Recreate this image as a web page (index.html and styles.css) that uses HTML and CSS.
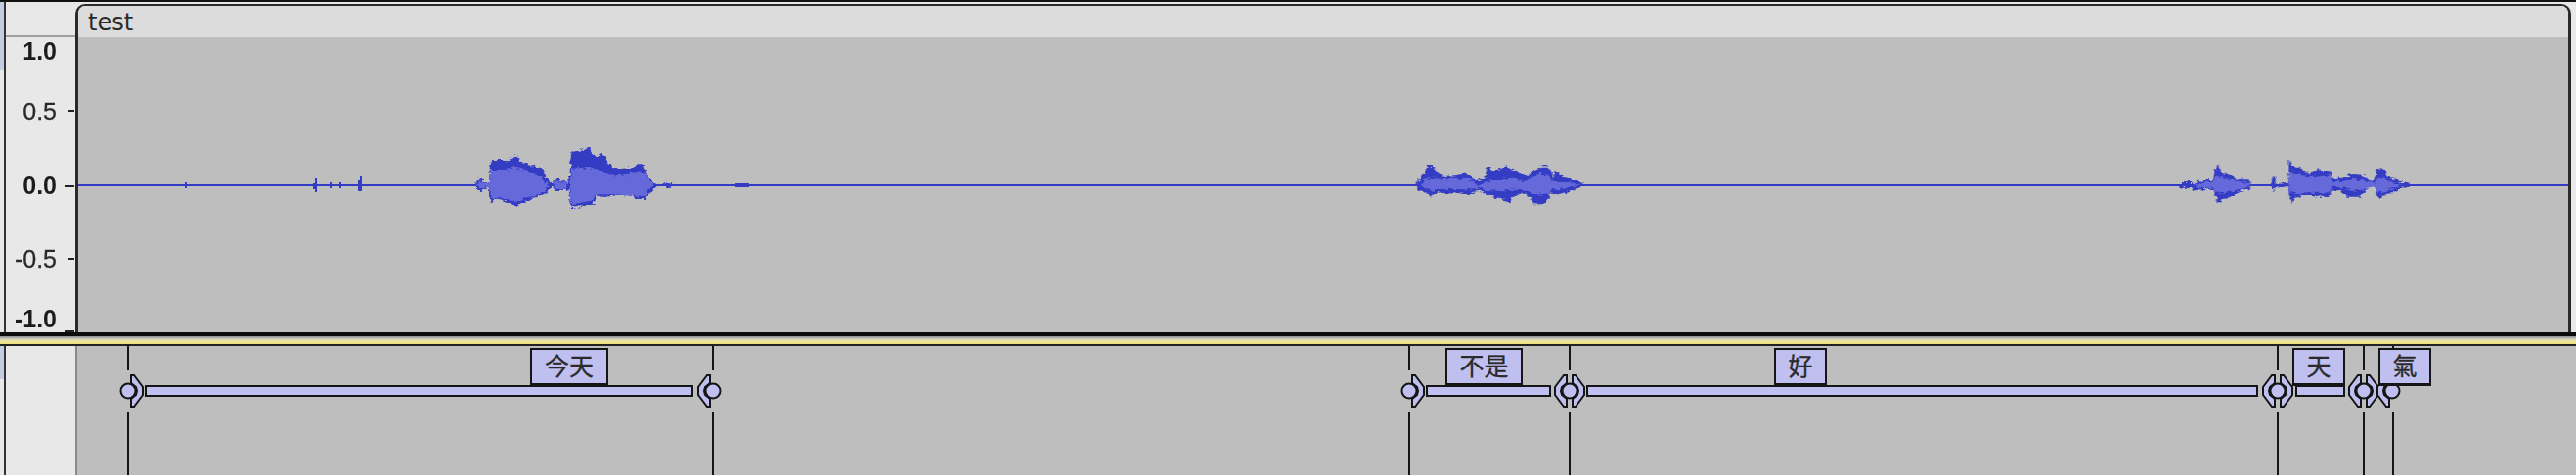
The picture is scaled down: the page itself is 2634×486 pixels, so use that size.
FILE: index.html
```html
<!DOCTYPE html>
<html>
<head>
    <title>test</title>
    <link rel="stylesheet" href="styles.css">
</head>
<body>
    <div class="top-line"></div>

    <div class="audio-row">
        <div class="strip"><div class="strip-tab tall"></div></div>
        <div class="ruler">
            <div class="ruler-head"></div>
            <div class="scale">
                <div class="mark bold">1.0</div>
                <div class="mark tick">0.5</div>
                <div class="mark bold tick long">0.0</div>
                <div class="mark tick">-0.5</div>
                <div class="mark bold">-1.0</div>
            </div>
        </div>
        <div class="clip">
            <div class="clip-title">test</div>
            <div class="clip-body">
                <svg class="wave" viewBox="80 38 2546 302" preserveAspectRatio="none">
                    <defs>
                        <!-- breaks up the smooth outlines so they read as sample columns -->
                        <filter id="rough" filterUnits="userSpaceOnUse" x="80" y="38" width="2546" height="302" color-interpolation-filters="sRGB">
                            <feTurbulence type="fractalNoise" baseFrequency="0.22 0.45" numOctaves="1" seed="4" result="noise"/>
                            <feDisplacementMap in="SourceGraphic" in2="noise" scale="7" xChannelSelector="R" yChannelSelector="G"/>
                        </filter>
                    </defs>

                    <rect class="peak" x="80" y="188" width="2546" height="2"/>

                    <!-- small blips before the first word -->
                    <rect class="peak" x="189" y="186" width="2" height="6"/>
                    <path class="peak" d="M320 187h2v-5h2v14h-2v-3h-2z"/>
                    <rect class="peak" x="337" y="186" width="2" height="6"/>
                    <rect class="peak" x="347" y="186" width="2" height="6"/>
                    <path class="peak" d="M366 184h2v-4h2v15h-4z"/>
                    <rect class="peak" x="752" y="187" width="14" height="4"/>

                    <g class="words">
                        <!-- 今天 -->
                        <g transform="translate(450 130) scale(0.3333)">
                            <path class="peak" d="M108 177 112 165 122 155 135 165 140 170 150 170 152 128 157 102 190 102 195 108 215 100 225 90 240 93 247 108 270 118 290 122 315 128 322 150 332 165 342 172 347 177 350 162 360 155 365 162 388 165 392 172 398 140 402 80 420 75 440 68 458 60 466 78 480 95 495 85 505 92 515 115 535 128 560 128 595 126 605 115 622 115 632 135 640 155 655 168 668 177 685 177 690 170 710 168 716 177 700 186 685 177 668 177 655 190 638 205 632 222 600 222 590 210 535 212 500 215 480 212 470 240 440 240 405 250 398 225 395 190 392 192 350 192 345 180 335 190 322 208 290 218 250 235 232 245 215 235 180 222 155 232 150 215 150 185 138 185 125 197 112 188z"/>
                            <path class="rms" d="M112 177 125 163 135 172 150 172 155 132 200 132 230 122 260 135 300 145 320 160 332 177 322 195 300 208 260 220 230 232 195 218 160 222 152 190 138 182 125 190zM350 166 388 168 388 188 350 188zM398 177 402 128 440 125 480 130 520 145 560 148 600 135 630 140 645 165 655 177 640 190 632 212 600 212 535 208 480 208 460 228 405 238 398 210z"/>
                        </g>

                        <!-- 不是 -->
                        <g transform="translate(1420 140) scale(0.3333)">
                            <path class="peak" d="M85 146 90 125 95 135 100 118 108 115 112 100 120 90 135 90 150 110 170 120 200 118 240 112 260 125 272 135 300 122 300 95 310 95 312 105 340 100 365 90 375 100 410 112 430 120 440 105 470 92 490 92 500 110 505 125 508 108 520 110 535 122 560 130 585 138 600 146 580 155 555 165 520 175 505 178 495 170 490 195 470 208 445 208 425 180 410 170 380 185 368 208 350 192 325 185 300 178 275 160 262 170 245 178 200 168 180 175 160 168 135 178 128 185 120 175 100 160 90 165z"/>
                            <path class="rms" d="M100 146 108 128 130 125 160 130 210 128 250 128 275 150 300 135 340 130 380 125 415 135 435 125 465 112 490 120 500 135 535 135 570 142 590 146 570 150 530 160 500 160 490 172 450 180 425 165 400 158 340 165 300 162 275 155 240 160 160 158 130 165 100 150z"/>
                        </g>

                        <!-- 天氣 -->
                        <g transform="translate(2200 140) scale(0.3333)">
                            <path class="peak" d="M85 146 85 138 125 138 130 146 140 135 170 130 190 128 195 98 205 85 210 108 240 112 260 130 270 125 275 130 300 130 305 146 305 150 300 160 270 165 250 180 215 195 205 205 195 180 190 160 130 160 125 155 85 155z"/>
                            <path class="peak" d="M365 146 370 125 378 120 380 140 420 138 422 72 430 88 460 100 480 110 505 105 510 92 520 105 545 105 552 125 590 125 610 115 640 115 660 125 680 135 692 100 705 97 718 105 720 122 745 125 765 138 790 140 792 152 765 155 745 170 720 175 715 185 690 185 685 150 665 150 650 170 640 185 600 185 580 165 552 160 545 185 510 185 495 180 470 180 440 190 430 205 422 180 420 150 380 155 375 165z"/>
                            <path class="rms" d="M130 146 190 132 200 120 240 128 260 135 300 140 303 146 300 152 250 165 215 172 195 168 190 155 150 155 130 150zM422 110 460 118 500 122 548 118 553 135 590 135 620 128 665 135 685 140 695 125 720 130 750 145 770 146 745 155 720 165 695 170 680 150 650 160 620 165 590 155 552 150 545 170 500 170 440 175 425 165 420 146z"/>
                        </g>
                    </g>
                </svg>
            </div>
        </div>
        <div class="edge"></div>
    </div>

    <div class="divider"></div>

    <div class="label-row">
        <div class="strip"><div class="strip-tab"></div></div>
        <div class="ruler"></div>
        <div class="lane">
            <svg class="handles" viewBox="79 354 2555 132">
                <defs>
                    <circle id="knob" r="7.5"/>
                    <path id="wing-right" d="M3 -16 6 -16 15 -4 15 4 6 16 3 16 3 8 8 4 9 0 8 -4 3 -8z"/>
                    <path id="wing-left" d="M-3 -16 -6 -16 -15 -4 -15 4 -6 16 -3 16 -3 8 -8 4 -9 0 -8 -4 -3 -8z"/>
                    <g id="handle-start"><use href="#wing-right"/><use href="#knob"/></g>
                    <g id="handle-end"><use href="#wing-left"/><use href="#knob"/></g>
                    <g id="handle-both"><use href="#wing-left"/><use href="#wing-right"/><use href="#knob"/></g>
                </defs>
                <path class="stems" d="M131 354V379M131 422V486M729 354V379M729 422V486M1441 354V379M1441 422V486M1605 354V379M1605 422V486M2329 354V379M2329 422V486M2417 354V379M2417 422V486M2447 354V379M2447 422V486"/>
                <use class="handle" href="#handle-start" x="131" y="400"/>
                <use class="handle" href="#handle-end" x="729" y="400"/>
                <use class="handle" href="#handle-start" x="1441" y="400"/>
                <use class="handle" href="#handle-both" x="1605" y="400"/>
                <use class="handle" href="#handle-both" x="2329" y="400"/>
                <use class="handle" href="#handle-both" x="2417" y="400"/>
                <use class="handle" href="#handle-end" x="2446" y="400"/>
            </svg>

            <div class="span" style="left: 69px; width: 561px"></div>
            <div class="span" style="left: 1379px; width: 128px"></div>
            <div class="span" style="left: 1543px; width: 687px"></div>
            <div class="span" style="left: 2268px; width: 51px"></div>

            <div class="label" style="left: 463px; width: 80px">今天</div>
            <div class="label" style="left: 1399px; width: 79px">不是</div>
            <div class="label" style="left: 1735px; width: 54px">好</div>
            <div class="label" style="left: 2265px; width: 54px">天</div>
            <div class="label" style="left: 2353px; width: 54px">氣</div>
        </div>
    </div>
</body>
</html>
```

FILE: styles.css
```css
html, body {
    margin: 0;
    padding: 0;
}

body {
    width: 2634px;
    height: 486px;
    overflow: hidden;
    background: #e8e8e8;
    font-family: "Liberation Sans", Arial, sans-serif;
    color: #222;
}

.top-line {
    height: 2px;
    background: #111;
}

.audio-row {
    display: flex;
    height: 338px;
}

.strip {
    width: 4px;
    border-right: 2px solid #333;
    flex: none;
}

.strip-tab {
    height: 34px;
    background: #c3cde0;
}

.strip-tab.tall {
    height: 70px;
}

.ruler {
    width: 71px;
    flex: none;
    background: #e8e8e8;
}

.ruler-head {
    height: 34px;
    border-bottom: 2px solid #a0a0a0;
}

.scale {
    display: grid;
    grid-template-rows: 28px 96px 55px 96px 27px;
    height: 302px;
    position: relative;
}

/* the tick at the very bottom of the scale */
.scale::after {
    content: "";
    position: absolute;
    right: 1px;
    bottom: 0;
    width: 10px;
    height: 2px;
    background: #222;
}

.mark {
    display: flex;
    align-items: center;
    justify-content: flex-end;
    padding-right: 19px;
    font-size: 25px;
    color: #2a2a2a;
    -webkit-text-stroke: 0.3px #2a2a2a;
    position: relative;
}

.mark.bold {
    font-weight: bold;
    color: #1c1c1c;
    -webkit-text-stroke: 0;
}

.mark.tick::after {
    content: "";
    position: absolute;
    right: 1px;
    top: 50%;
    width: 6px;
    height: 2px;
    margin-top: -1px;
    background: #222;
}

.mark.tick.long::after {
    width: 10px;
}

.clip {
    width: 2552px;
    flex: none;
    margin-top: 2px;
    box-sizing: border-box;
    border: 3px solid #2a2a2a;
    border-top-width: 2px;
    border-bottom: none;
    border-radius: 10px 10px 0 0;
    display: flex;
    flex-direction: column;
    overflow: hidden;
}

.clip-title {
    height: 32px;
    flex: none;
    box-sizing: border-box;
    padding: 4px 0 0 10px;
    background: #dcdcdc;
    font-family: "DejaVu Sans", sans-serif;
    font-size: 24px;
    line-height: 26px;
    color: #2a2a2a;
}

.clip-body {
    flex: 1;
    background: #bebebe;
}

.wave {
    display: block;
    width: 100%;
    height: 100%;
}

.words {
    filter: url(#rough);
}

.peak {
    fill: #343cc4;
}

.rms {
    fill: #6569d9;
}

.edge {
    flex: 1;
}

.divider {
    height: 14px;
    box-sizing: border-box;
    border-top: 4px solid #0c0c0c;
    border-bottom: 2px solid #222;
    background: linear-gradient(#8a8a90, #d8d8c0 40%, #f2e98a 75%, #e8df80);
}

.label-row {
    display: flex;
    height: 132px;
}

.lane {
    flex: 1;
    position: relative;
    border-left: 2px solid #8a8a8a;
    background: #bebebe;
}

.handles {
    position: absolute;
    left: 0;
    top: 0;
    width: 2555px;
    height: 132px;
}

.stems {
    fill: none;
    stroke: #151515;
    stroke-width: 2;
}

.handle {
    fill: #c0c0f0;
    stroke: #151515;
    stroke-width: 2;
}

.span {
    position: absolute;
    top: 40px;
    height: 12px;
    box-sizing: border-box;
    border: 2px solid #151515;
    background: #c0c0f0;
}

.label {
    position: absolute;
    top: 2px;
    height: 39px;
    box-sizing: border-box;
    border: 2px solid #151515;
    border-bottom-width: 3px;
    background: #c0c0f0;
    display: flex;
    align-items: center;
    justify-content: center;
    font-family: "Liberation Sans", "Noto Sans CJK TC", sans-serif;
    font-size: 25px;
    line-height: 1;
    color: #2a2a2a;
    -webkit-text-stroke: 0.3px #2a2a2a;
}
```
